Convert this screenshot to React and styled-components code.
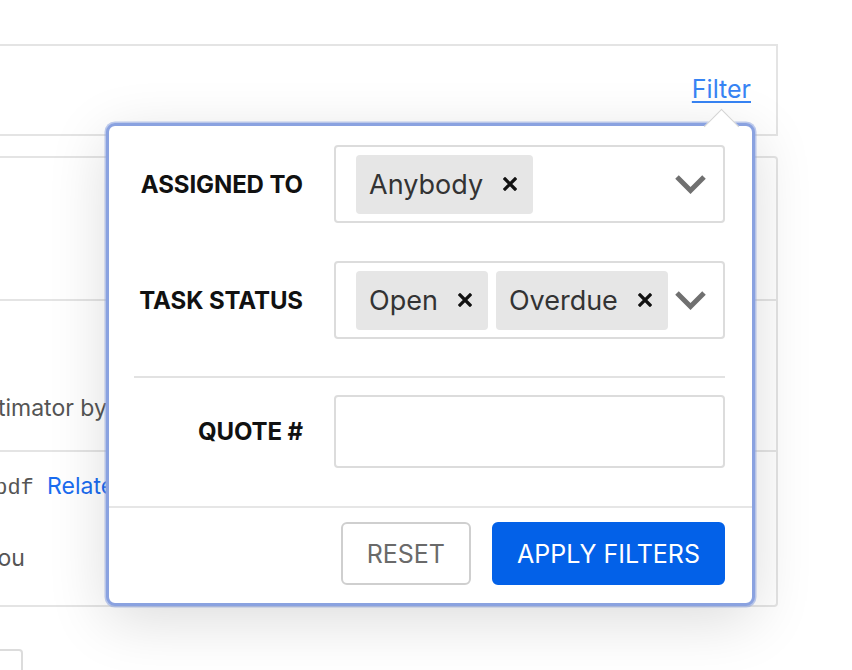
import React from 'react';
import styled, { createGlobalStyle } from 'styled-components';

const Global = createGlobalStyle`
  html, body {
    margin: 0;
    padding: 0;
    background: #fff;
  }
  body {
    font-family: Inter, "Noto Sans", "Liberation Sans", sans-serif;
    color: #333;
  }
  * {
    box-sizing: border-box;
  }
`;

const Stage = styled.div`
  position: relative;
  width: 852px;
  height: 670px;
  overflow: hidden;
`;

// page behind the popover
const Board = styled.div`
  margin-left: -60px;
  padding-top: 44px;
  width: 838px;
`;

const TopCard = styled.div`
  height: 92px;
  border: 2px solid #e4e4e4;
  border-left: none;
  display: flex;
  justify-content: flex-end;
  align-items: flex-start;
  padding: 31px 25px 0 0;
`;

const FilterLink = styled.a`
  font-size: 25px;
  line-height: 25px;
  color: #3784f4;
  text-decoration: underline;
  text-decoration-thickness: 2px;
  text-underline-offset: 3px;
  cursor: pointer;
`;

const ListCard = styled.div`
  margin-top: 20px;
  border: 2px solid #e4e4e4;
  border-left: none;
  border-radius: 0 4px 4px 0;
`;

const ListRow = styled.div`
  height: ${(p) => p.$h}px;
  padding-top: ${(p) => p.$pad || 0}px;
  border-top: ${(p) => (p.$first ? 'none' : '2px solid #e4e4e4')};
  white-space: nowrap;
  overflow: hidden;
`;

const Line = styled.div`
  margin-left: ${(p) => p.$indent}px;
  margin-top: ${(p) => p.$gap || 0}px;
  font-size: 23px;
  line-height: 30px;
  color: #555;
`;

const Mono = styled.span`
  font-family: "Liberation Mono", "DejaVu Sans Mono", monospace;
  font-size: 22px;
  white-space: pre;
  color: #555;
`;

const RowLink = styled.span`
  color: #1a6cf0;
`;

const BottomBox = styled.div`
  margin-top: 42px;
  width: 83px;
  height: 40px;
  border: 2px solid #dcdcdc;
  border-left: none;
  border-radius: 0 4px 0 0;
`;

// popover
const Popover = styled.div`
  position: absolute;
  left: 106px;
  top: 123px;
  width: 649px;
  background: #fff;
  border: 3px solid #8aa2e0;
  border-radius: 9px;
  box-shadow: 0 0 0 1.5px rgba(138, 162, 224, 0.55), 0 14px 60px rgba(0, 0, 0, 0.14);

  &::before {
    content: '';
    position: absolute;
    top: -12px;
    right: 18px;
    width: 24px;
    height: 24px;
    background: #fff;
    border-top: 1px solid #d4d4d4;
    border-left: 1px solid #d4d4d4;
    transform: rotate(45deg);
  }
`;

const Body = styled.div`
  padding: 19px 27px 38px 25px;
`;

const Field = styled.div`
  display: flex;
  align-items: center;
  gap: 31px;
  margin-bottom: ${(p) => p.$mb || 0}px;
`;

const Label = styled.label`
  width: 169px;
  flex-shrink: 0;
  text-align: right;
  font-size: 24px;
  font-weight: 700;
  letter-spacing: -0.1px;
  color: #111;
`;

const Select = styled.div`
  flex: 1;
  min-width: 0;
  height: 78px;
  display: flex;
  align-items: center;
  padding: 0 16px 0 20px;
  border: 2px solid #dcdcdc;
  border-radius: 4px;
`;

const Tags = styled.div`
  flex: 1;
  display: flex;
  gap: 8px;
`;

const Tag = styled.span`
  display: inline-flex;
  align-items: center;
  height: 59px;
  padding: 0 16px 0 13px;
  gap: 20px;
  background: #e6e6e6;
  border-radius: 4px;
  font-size: 27px;
  color: #333;
`;

const Chevron = styled.svg`
  flex-shrink: 0;
  margin-left: 4px;
`;

const TextInput = styled.input`
  flex: 1;
  min-width: 0;
  width: 0;
  height: 73px;
  border: 2px solid #dcdcdc;
  border-radius: 4px;
  font-family: inherit;
  font-size: 24px;
  padding: 0 16px;
  outline: none;
`;

const Divider = styled.hr`
  border: none;
  border-top: 2px solid #e2e2e2;
  margin: 37px 0 17px;
`;

const Footer = styled.div`
  border-top: 2px solid #e6e6e6;
  padding: 14px 27px 18px;
  display: flex;
  justify-content: flex-end;
  gap: 21px;
`;

const Button = styled.button`
  height: 63px;
  padding: 0 ${(p) => (p.$primary ? 23 : 24)}px;
  border-radius: 6px;
  font-family: inherit;
  font-size: 25px;
  cursor: pointer;
  border: 2px solid ${(p) => (p.$primary ? '#0361e8' : '#cfcfcf')};
  background: ${(p) => (p.$primary ? '#0361e8' : '#fff')};
  color: ${(p) => (p.$primary ? '#fff' : '#6a6a6a')};
`;

const Cross = () => (
  <svg width="14" height="14" viewBox="0 0 14 14">
    <path d="M2 2 L12 12 M12 2 L2 12" stroke="#111" strokeWidth="3.2" strokeLinecap="square" />
  </svg>
);

const Caret = () => (
  <Chevron width="33" height="20" viewBox="0 0 33 20">
    <polyline points="3,3 16.5,16.5 30,3" fill="none" stroke="#707070" strokeWidth="5" />
  </Chevron>
);

const MultiSelect = ({ values }) => (
  <Select>
    <Tags>
      {values.map((v) => (
        <Tag key={v}>
          {v}
          <Cross />
        </Tag>
      ))}
    </Tags>
    <Caret />
  </Select>
);

export default function App() {
  return (
    <Stage>
      <Global />
      <Board>
        <TopCard>
          <FilterLink>Filter</FilterLink>
        </TopCard>
        <ListCard>
          <ListRow $first $h={141} />
          <ListRow $h={151} $pad={92}>
            <Line $indent={32}>Estimator by Jane Cooper</Line>
          </ListRow>
          <ListRow $h={155} $pad={19}>
            <Line $indent={-25}>
              <Mono>quote.pdf </Mono>
              <RowLink>Related task</RowLink>
            </Line>
            <Line $indent={-29} $gap={39}>Thank you</Line>
          </ListRow>
        </ListCard>
        <BottomBox />
      </Board>

      <Popover>
        <Body>
          <Field $mb={38}>
            <Label>ASSIGNED TO</Label>
            <MultiSelect values={['Anybody']} />
          </Field>
          <Field>
            <Label>TASK STATUS</Label>
            <MultiSelect values={['Open', 'Overdue']} />
          </Field>
          <Divider />
          <Field>
            <Label>QUOTE #</Label>
            <TextInput />
          </Field>
        </Body>
        <Footer>
          <Button>RESET</Button>
          <Button $primary>APPLY FILTERS</Button>
        </Footer>
      </Popover>
    </Stage>
  );
}
